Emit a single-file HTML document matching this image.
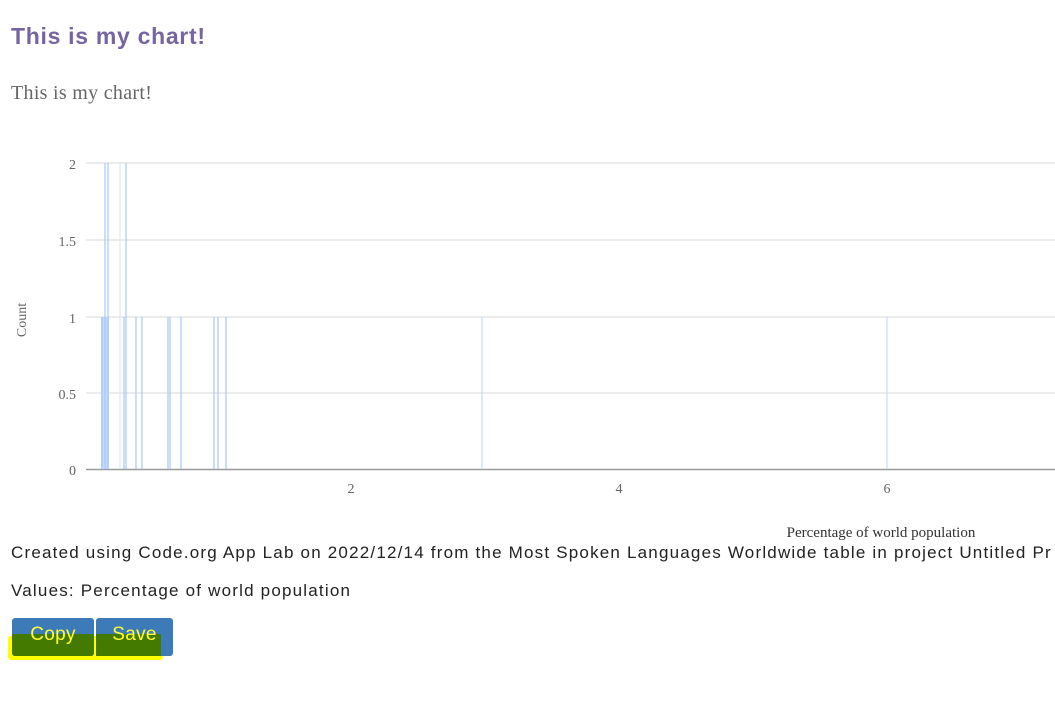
<!DOCTYPE html>
<html><head><style>
body{margin:0;background:#fff;width:1055px;height:716px;overflow:hidden;position:relative;font-family:"Liberation Sans",sans-serif}
.a{position:absolute;white-space:nowrap}
</style></head><body>
<div class="a" style="left:11px;top:23px;font-size:23px;font-weight:bold;color:#7665a0;letter-spacing:0.7px">This is my chart!</div>
<div class="a" style="left:11px;top:82px;font-size:20px;font-family:'Liberation Serif',serif;color:#666;letter-spacing:0.3px">This is my chart!</div>
<svg class="a" style="left:0;top:140px" width="1055" height="410" font-family="Liberation Serif,serif" font-size="14" fill="#666">
<g stroke="#e6e6e6" stroke-width="1.5">
<line x1="86" y1="23" x2="1055" y2="23"/><line x1="86" y1="100" x2="1055" y2="100"/><line x1="86" y1="177" x2="1055" y2="177"/><line x1="86" y1="253" x2="1055" y2="253"/></g>
<line x1="86" y1="329.5" x2="1055" y2="329.5" stroke="#999" stroke-width="1.5"/>
<g text-anchor="end"><text x="76" y="29">2</text><text x="76" y="106">1.5</text><text x="76" y="183">1</text><text x="76" y="259">0.5</text><text x="76" y="335">0</text></g>
<g text-anchor="middle"><text x="351" y="353">2</text><text x="619" y="353">4</text><text x="887" y="353">6</text></g>
<text x="26" y="180" transform="rotate(-90 26 180)" text-anchor="middle">Count</text>
<text x="881" y="397" text-anchor="middle" font-size="15" fill="#333">Percentage of world population</text>
<rect x="101" y="177" width="8" height="152" fill="#c6dafc"/>
<g stroke="#a8c7fa" stroke-width="1.2">
<line x1="102" y1="177" x2="102" y2="329"/><line x1="105" y1="23" x2="105" y2="329"/><line x1="108" y1="23" x2="108" y2="329"/>
<line x1="120" y1="23" x2="120" y2="329" stroke="#dbe7fd"/><line x1="124" y1="177" x2="124" y2="329"/><line x1="126" y1="23" x2="126" y2="329"/>
<line x1="136" y1="177" x2="136" y2="329"/><line x1="142" y1="177" x2="142" y2="329"/><line x1="168" y1="177" x2="168" y2="329"/><line x1="170" y1="177" x2="170" y2="329"/><line x1="181" y1="177" x2="181" y2="329"/><line x1="214" y1="177" x2="214" y2="329"/><line x1="218" y1="177" x2="218" y2="329"/><line x1="226" y1="177" x2="226" y2="329"/><line x1="482" y1="177" x2="482" y2="329" stroke="#c6dafc"/><line x1="887" y1="177" x2="887" y2="329" stroke="#c6dafc"/>
</g></svg>
<div class="a" style="left:11px;top:543px;width:1044px;overflow:hidden;font-size:17px;color:#222;letter-spacing:1.2px">Created using Code.org App Lab on 2022/12/14 from the Most Spoken Languages Worldwide table in project Untitled Pr</div>
<div class="a" style="left:11px;top:581px;font-size:17px;color:#222;letter-spacing:1.2px">Values: Percentage of world population</div>
<div class="a" style="left:8px;top:636px;width:155px;height:24px;background:#ffff00;border-radius:3px"></div>
<div class="a" style="left:12px;top:618px;width:82px;height:38px;background:#3d7ab8;border-radius:3px"></div>
<div class="a" style="left:96px;top:618px;width:77px;height:38px;background:#3d7ab8;border-radius:3px"></div>
<div class="a" style="left:12px;top:634px;width:82px;height:22px;background:#457a00;border-radius:0 0 3px 3px"></div>
<div class="a" style="left:96px;top:634px;width:65px;height:22px;background:#457a00"></div>
<div class="a" style="left:12px;top:624px;width:82px;text-align:center;font-size:19px;color:#ffff33;letter-spacing:0.3px">Copy</div>
<div class="a" style="left:96px;top:624px;width:77px;text-align:center;font-size:19px;color:#ffff33;letter-spacing:0.3px">Save</div>
</body></html>
